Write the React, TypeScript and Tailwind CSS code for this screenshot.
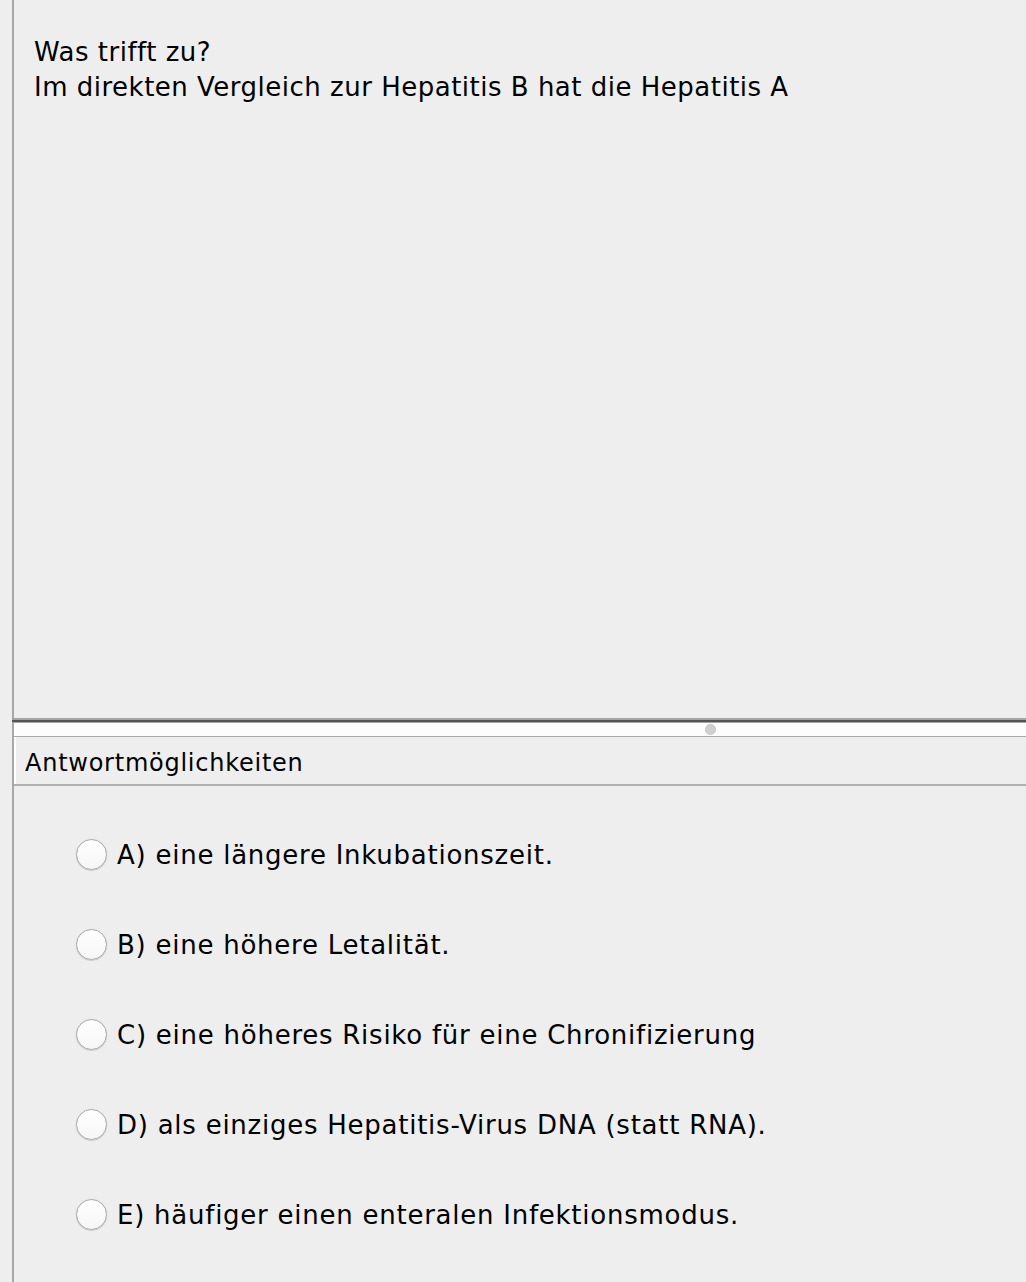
import React from "react";

const options = [
  "A) eine längere Inkubationszeit.",
  "B) eine höhere Letalität.",
  "C) eine höheres Risiko für eine Chronifizierung",
  "D) als einziges Hepatitis-Virus DNA (statt RNA).",
  "E) häufiger einen enteralen Infektionsmodus.",
];

function Radio() {
  return (
    <span className="block w-[31px] h-[31px] shrink-0 rounded-full border border-[#a9a9a9] bg-gradient-to-b from-[#ffffff] to-[#f6f6f6] shadow-[0_0.5px_1px_rgba(0,0,0,0.25)]" />
  );
}

export default function App() {
  return (
    <div
      className="w-[1026px] h-[1282px] bg-[#eeeeee] text-black overflow-hidden flex"
      style={{ fontFamily: '"Lucida Grande", "DejaVu Sans", sans-serif' }}
    >
      <div className="w-[12px] shrink-0" />
      <div className="flex-1 flex flex-col border-l-2 border-[#a8a8a8]">
        {/* question panel */}
        <div className="h-[718px] shrink-0 pl-[20px] pt-[35px] text-[26px] leading-[35px] tracking-[0.5px]">
          <div>Was trifft zu?</div>
          <div>Im direkten Vergleich zur Hepatitis B hat die Hepatitis A</div>
        </div>
        {/* split divider */}
        <div className="relative shrink-0 -ml-[2px]">
          <div className="h-[2px] bg-[#a4a4a4]" />
          <div className="h-[2px] bg-[#545454]" />
          <div className="h-[1px] bg-[#a4a4a4]" />
          <div className="h-[13px] bg-[#fdfdfd] ml-[2px]" />
          <span className="absolute left-[693px] top-[6px] w-[11px] h-[11px] rounded-full bg-[#cfcfcf] border border-[#c4c4c4]" />
        </div>
        <div className="h-[1px] bg-[#a8a8a8] shrink-0" />
        {/* answer header */}
        <div className="h-[47px] shrink-0 flex items-center border-l-2 border-[#ffffff] pl-[9px] pt-[4px] text-[24px] tracking-[0.75px]">
          Antwortmöglichkeiten
        </div>
        <div className="h-[2px] bg-[#b0b0b0] shrink-0" />
        {/* options */}
        <div className="flex flex-col pt-[53px] pl-[62px] gap-[59px]">
          {options.map((o) => (
            <div key={o} className="flex items-center h-[31px] gap-[10px] text-[26px] tracking-[0.75px]">
              <Radio />
              <span className="leading-none">{o}</span>
            </div>
          ))}
        </div>
      </div>
    </div>
  );
}
